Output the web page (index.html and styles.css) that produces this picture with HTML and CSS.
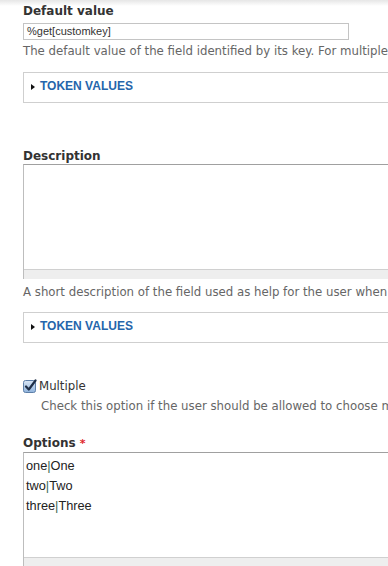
FILE: index.html
```
<!DOCTYPE html>
<html>
<head>
<meta charset="utf-8">
<link rel="stylesheet" href="styles.css">
</head>
<body>
<div class="page">
  <div class="item item-first">
    <div class="label">Default value</div>
    <div class="text-input">%get[customkey]</div>
    <div class="help">The default value of the field identified by its key. For multiple</div>
    <div class="tokens"><span class="tri"></span><span class="tokens-title">TOKEN VALUES</span></div>
  </div>

  <div class="item item-desc">
    <div class="label">Description</div>
    <div class="textarea"><div class="ta-body ta-body-desc"></div><div class="grip"></div></div>
    <div class="help help-desc">A short description of the field used as help for the user when</div>
    <div class="tokens tokens-second"><span class="tri"></span><span class="tokens-title">TOKEN VALUES</span></div>
  </div>

  <div class="item item-check">
    <div class="check-row">
      <svg class="checkbox" width="14" height="14" viewBox="0 0 14 14">
        <defs>
          <linearGradient id="cb" x1="0" y1="0" x2="0" y2="1">
            <stop offset="0" stop-color="#d9e6f5"/>
            <stop offset="1" stop-color="#8fb3dc"/>
          </linearGradient>
        </defs>
        <rect x="0.5" y="1.5" width="12" height="12" rx="2" fill="url(#cb)" stroke="#5d7fa8"/>
        <path d="M3 7.5 L5.8 10.5 L12.5 1.5" fill="none" stroke="#1e2f48" stroke-width="2.2" stroke-linecap="round" stroke-linejoin="round"/>
      </svg>
      <span class="check-label">Multiple</span>
    </div>
    <div class="help help-check">Check this option if the user should be allowed to choose m</div>
  </div>

  <div class="item item-options">
    <div class="label">Options <span class="req">*</span></div>
    <div class="textarea"><div class="ta-body ta-body-opt"><div class="opt">one<span class="bar">|</span>One</div><div class="opt">two<span class="bar">|</span>Two</div><div class="opt">three<span class="bar">|</span>Three</div></div><div class="grip"></div></div>
  </div>
</div>
</body>
</html>
```

FILE: styles.css
```
html, body {
  margin: 0;
  padding: 0;
  background: #fff;
  overflow: hidden;
}
body {
  width: 388px;
  height: 566px;
  position: relative;
}
body::before {
  content: "";
  position: absolute;
  left: 0;
  top: 0;
  width: 100%;
  height: 6px;
  background: linear-gradient(to bottom, #e6e6e6, rgba(255,255,255,0));
}
.page {
  padding-left: 23px;
  font-family: "DejaVu Sans", "Liberation Sans", sans-serif;
  color: #555;
  white-space: nowrap;
}
.item-first {
  padding-top: 3px;
}
.label {
  font-size: 12px;
  font-weight: bold;
  color: #333;
  line-height: 16px;
  height: 16px;
}
.req {
  color: #e0262b;
  font-size: 11px;
}
.text-input {
  margin-top: 4px;
  width: 318px;
  height: 15px;
  border: 1px solid #c4c4c4;
  padding: 0 3px;
  font-family: "Liberation Sans", Arial, sans-serif;
  font-size: 11px;
  line-height: 15px;
  color: #333;
}
.help {
  font-size: 11.75px;
  line-height: 16px;
  color: #666;
  margin-top: 3px;
}
.tokens {
  margin-top: 13px;
  width: 600px;
  height: 24px;
  border: 1px solid #cfcfcf;
  display: flex;
  align-items: flex-start;
  padding: 5px 0 0 7px;
}
.tri {
  width: 0;
  height: 0;
  border-top: 3px solid transparent;
  border-bottom: 3px solid transparent;
  border-left: 4px solid #111;
  margin-right: 5px;
  margin-top: 6px;
}
.tokens-title {
  font-family: "Liberation Sans", Arial, sans-serif;
  font-size: 12px;
  font-weight: bold;
  color: #2565ab;
  line-height: 16px;
}
.item-desc {
  margin-top: 45px;
}
.textarea {
  width: 600px;
  border: 1px solid #bdbdbd;
  border-top-color: #a0a0a0;
  border-bottom: none;
}
.ta-body {
  background: #fff;
}
.ta-body-desc {
  height: 104px;
}
.grip {
  height: 9px;
  background: #eeeeee;
  border-top: 1px solid #d0d0d0;
}
.help-desc {
  margin-top: 5px;
}
.tokens-second {
  margin-top: 12px;
}
.item-check {
  margin-top: 35px;
}
.check-row {
  display: flex;
  align-items: center;
  height: 16px;
}
.checkbox {
  display: block;
  margin-right: 2px;
}
.check-label {
  font-size: 11.75px;
  color: #333;
  line-height: 16px;
}
.help-check {
  padding-left: 18px;
  margin-top: 4px;
}
.item-options {
  margin-top: 21px;
}
.item-options .textarea {
  margin-top: 1px;
}
.ta-body-opt {
  height: 104px;
  padding: 3px 0 0 2px;
  box-sizing: border-box;
  font-family: "Liberation Sans", Arial, sans-serif;
  font-size: 12.75px;
  line-height: 20px;
  color: #222;
}
.bar {
  color: #3a6a55;
}
```
